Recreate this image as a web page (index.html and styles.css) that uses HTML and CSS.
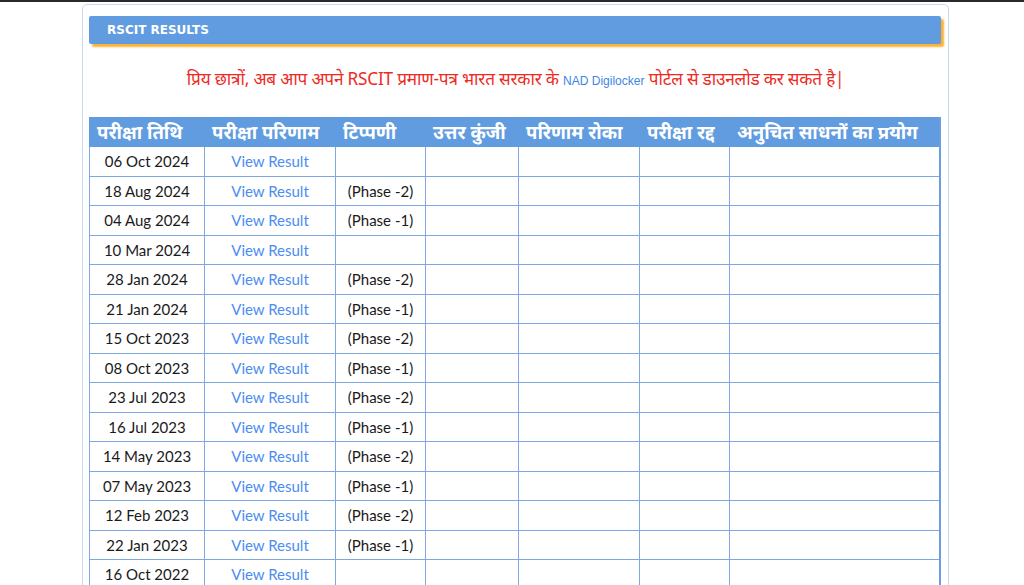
FILE: index.html
```html
<!DOCTYPE html>
<html lang="hi">
<head>
<meta charset="utf-8">
<title>RSCIT Results</title>
<link rel="stylesheet" href="styles.css">
</head>
<body>
<div class="topbar"></div>
<div class="panel">
  <div class="panel-head">RSCIT RESULTS</div>
  <p class="notice">प्रिय छात्रों, अब आप अपने RSCIT प्रमाण-पत्र भारत सरकार के <a class="nad" href="#">NAD Digilocker</a> पोर्टल से डाउनलोड कर सकते है|</p>
  <table class="results">
    <colgroup>
      <col class="c1"><col class="c2"><col class="c3"><col class="c4"><col class="c5"><col class="c6"><col class="c7">
    </colgroup>
    <thead>
      <tr>
        <th>परीक्षा तिथि</th>
        <th>परीक्षा परिणाम</th>
        <th>टिप्पणी</th>
        <th>उत्तर कुंजी</th>
        <th>परिणाम रोका</th>
        <th>परीक्षा रद्द</th>
        <th>अनुचित साधनों का प्रयोग</th>
      </tr>
    </thead>
    <tbody>
      <tr><td>06 Oct 2024</td><td><a href="#">View Result</a></td><td></td><td></td><td></td><td></td><td></td></tr>
      <tr><td>18 Aug 2024</td><td><a href="#">View Result</a></td><td>(Phase -2)</td><td></td><td></td><td></td><td></td></tr>
      <tr><td>04 Aug 2024</td><td><a href="#">View Result</a></td><td>(Phase -1)</td><td></td><td></td><td></td><td></td></tr>
      <tr><td>10 Mar 2024</td><td><a href="#">View Result</a></td><td></td><td></td><td></td><td></td><td></td></tr>
      <tr><td>28 Jan 2024</td><td><a href="#">View Result</a></td><td>(Phase -2)</td><td></td><td></td><td></td><td></td></tr>
      <tr><td>21 Jan 2024</td><td><a href="#">View Result</a></td><td>(Phase -1)</td><td></td><td></td><td></td><td></td></tr>
      <tr><td>15 Oct 2023</td><td><a href="#">View Result</a></td><td>(Phase -2)</td><td></td><td></td><td></td><td></td></tr>
      <tr><td>08 Oct 2023</td><td><a href="#">View Result</a></td><td>(Phase -1)</td><td></td><td></td><td></td><td></td></tr>
      <tr><td>23 Jul 2023</td><td><a href="#">View Result</a></td><td>(Phase -2)</td><td></td><td></td><td></td><td></td></tr>
      <tr><td>16 Jul 2023</td><td><a href="#">View Result</a></td><td>(Phase -1)</td><td></td><td></td><td></td><td></td></tr>
      <tr><td>14 May 2023</td><td><a href="#">View Result</a></td><td>(Phase -2)</td><td></td><td></td><td></td><td></td></tr>
      <tr><td>07 May 2023</td><td><a href="#">View Result</a></td><td>(Phase -1)</td><td></td><td></td><td></td><td></td></tr>
      <tr><td>12 Feb 2023</td><td><a href="#">View Result</a></td><td>(Phase -2)</td><td></td><td></td><td></td><td></td></tr>
      <tr><td>22 Jan 2023</td><td><a href="#">View Result</a></td><td>(Phase -1)</td><td></td><td></td><td></td><td></td></tr>
      <tr><td>16 Oct 2022</td><td><a href="#">View Result</a></td><td></td><td></td><td></td><td></td><td></td></tr>
    </tbody>
  </table>
</div>
</body>
</html>
```

FILE: styles.css
```css
html, body {
  margin: 0;
  padding: 0;
  background: #ffffff;
}

body {
  font-family: Lato, "Noto Sans", sans-serif;
  overflow: hidden;
}

.topbar {
  height: 2px;
  background: #2a2a2a;
}

.panel {
  box-sizing: border-box;
  margin: 2px 0 0 82px;
  width: 867px;
  border: 1px solid #c8d9ee;
  border-radius: 5px;
  padding: 11px 6px 20px 6px;
  height: 640px;
}

.panel-head {
  box-sizing: border-box;
  width: 852px;
  height: 28px;
  background: #609cdf;
  box-shadow: 3px 3px 2px #f9b233;
  border-radius: 2px;
  color: #ffffff;
  font-family: "DejaVu Sans", Verdana, sans-serif;
  font-weight: bold;
  font-size: 12px;
  line-height: 28px;
  padding-left: 18px;
}

.notice {
  margin: 23px 0 0 0;
  text-align: center;
  color: #ee2a24;
  font-family: "Noto Sans", "Noto Sans Devanagari", sans-serif;
  font-size: 17.2px;
  line-height: 24px;
  letter-spacing: -0.2px;
}

.nad {
  color: #3d86e6;
  text-decoration: none;
  font-family: "Liberation Sans", Arial, sans-serif;
  font-size: 12px;
  letter-spacing: 0;
}

.results {
  margin-top: 24px;
  width: 850px;
  border-collapse: collapse;
  table-layout: fixed;
  border-right: 2px solid #6a9ee2;
}

.c1 { width: 115px; }
.c2 { width: 131px; }
.c3 { width: 90px; }
.c4 { width: 93px; }
.c5 { width: 121px; }
.c6 { width: 90px; }
.c7 { width: 210px; }

.results th {
  background: #609cdf;
  color: #ffffff;
  font-family: "Noto Sans", "Noto Sans Devanagari", sans-serif;
  font-weight: bold;
  font-size: 18.5px;
  text-align: left;
  padding: 0 0 0 7px;
  height: 28px;
  line-height: 26px;
  border: 1px solid #609cdf;
  white-space: nowrap;
  overflow: hidden;
}

.results td {
  border: 1px solid #7ea8e4;
  height: 28.5px;
  padding: 0;
  text-align: center;
  font-size: 15px;
  color: #1a1a1a;
  line-height: 20px;
}

.results td a {
  color: #4b8df0;
  text-decoration: none;
}
```
